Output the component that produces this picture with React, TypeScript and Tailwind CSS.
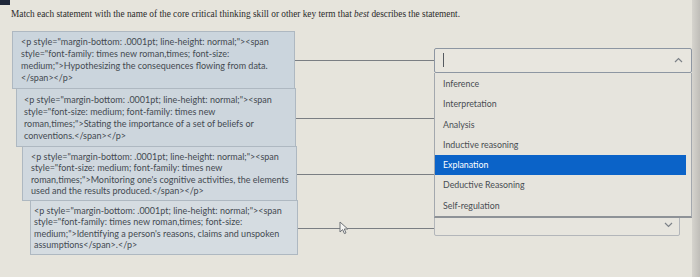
import React from "react";

const cards: { lines: string[]; cls: string; text: string }[] = [
  {
    lines: [
      '<p style="margin-bottom: .0001pt; line-height: normal;"><span',
      'style="font-family: times new roman,times; font-size:',
      'medium;">Hypothesizing the consequences flowing from data.',
      "</span></p>",
    ],
    cls: "ml-[12px] w-[283px] h-[58px] bg-[#cbd5dd]",
    text: "pl-[8px] leading-[12px]",
  },
  {
    lines: [
      '<p style="margin-bottom: .0001pt; line-height: normal;"><span',
      'style="font-size: medium; font-family: times new',
      'roman,times;">Stating the importance of a set of beliefs or',
      "conventions.</span></p>",
    ],
    cls: "ml-[16px] w-[280px] h-[59px] bg-[#cdd6dd] -mt-px",
    text: "pl-[7px] leading-[12px]",
  },
  {
    lines: [
      '<p style="margin-bottom: .0001pt; line-height: normal;"><span',
      'style="font-size: medium; font-family: times new',
      'roman,times;">Monitoring one\'s cognitive activities, the elements',
      "used and the results produced.</span></p>",
    ],
    cls: "ml-[22px] w-[275px] h-[55px] bg-[#d0d8df] -mt-px",
    text: "pl-[8px] leading-[11.5px]",
  },
  {
    lines: [
      '<p style="margin-bottom: .0001pt; line-height: normal;"><span',
      'style="font-family: times new roman,times; font-size:',
      'medium;">Identifying a person\'s reasons, claims and unspoken',
      "assumptions</span>.</p>",
    ],
    cls: "ml-[30px] w-[268px] h-[55px] bg-[#d5dce1] -mt-px",
    text: "pl-[3px] leading-[11.5px]",
  },
];

const options = [
  "Inference",
  "Interpretation",
  "Analysis",
  "Inductive reasoning",
  "Explanation",
  "Deductive Reasoning",
  "Self-regulation",
];

function ChevronUp() {
  return (
    <svg width="9" height="6" viewBox="0 0 9 6" className="block">
      <path d="M1 5 L4.5 1.5 L8 5" fill="none" stroke="#7d8288" strokeWidth="1.2" />
    </svg>
  );
}

function ChevronDown() {
  return (
    <svg width="9" height="6" viewBox="0 0 9 6" className="block">
      <path d="M1 1 L4.5 4.5 L8 1" fill="none" stroke="#7d8288" strokeWidth="1.2" />
    </svg>
  );
}

function Cursor() {
  return (
    <svg width="10" height="14" viewBox="0 0 10 14">
      <path
        d="M1 1 L1 11 L3.6 8.6 L5.4 12.6 L7 11.9 L5.3 8 L8.8 8 Z"
        fill="#f4f4f2"
        stroke="#6e7277"
        strokeWidth="1"
        strokeLinejoin="round"
      />
    </svg>
  );
}

export default function App() {
  return (
    <div
      className="flex w-[700px] h-[277px] overflow-hidden bg-[#e6e4dc]"
      style={{ fontFamily: "Lato, 'Noto Sans', sans-serif" }}
    >
      <div className="relative flex-1 flex flex-col">
        <div className="w-[10px] h-[5px] bg-[#1f283a]" />
        <p
          className="ml-[11px] mt-[4px] text-[9.3px] leading-[10px] text-[#2b2b2b] whitespace-nowrap"
          style={{ fontFamily: "'Liberation Serif', 'Times New Roman', serif" }}
        >
          Match each statement with the name of the core critical thinking skill or other key term that{" "}
          <i>best</i> describes the statement.
        </p>

        <div className="mt-[12px] flex flex-col">
          {cards.map((c, i) => (
            <div key={i} className="flex items-stretch">
              <div
                className={`${c.cls} shrink-0 border border-[#aeb8c1] flex flex-col justify-center`}
              >
                <div className={`${c.text} text-[9px] text-[#444a51] whitespace-nowrap`}>
                  {c.lines.map((l, j) => (
                    <div key={j}>{l}</div>
                  ))}
                </div>
              </div>
              <div className={`flex-1 flex ${i === 3 ? "items-start" : "items-center"}`}>
                <div className={`flex-1 h-px bg-[#7a7e83] ${i === 3 ? "mt-[27px]" : ""}`} />
                {i === 0 && (
                  <div className="relative w-[258px] h-[25px] border border-[#8d96a2] rounded-[2px] bg-[#e8e6df] flex items-center justify-between px-[8px]">
                    <div className="w-px h-[14px] bg-[#555a60]" />
                    <ChevronUp />
                    <div className="absolute left-[-1px] top-[24px] w-[258px] h-[145px] border border-t-0 border-[#a3a8ae] border-b-2 border-b-[#8e9297] bg-[#e6e4dd] z-10 flex flex-col pt-[1px]">
                      {options.map((o) => (
                        <div
                          key={o}
                          className={`h-[20.5px] flex items-center pl-[8px] text-[8.8px] ${
                            o === "Explanation"
                              ? "bg-[#0b63c8] text-white mr-[5px]"
                              : "text-[#484d53]"
                          }`}
                        >
                          {o}
                        </div>
                      ))}
                    </div>
                  </div>
                )}
                {(i === 1 || i === 2) && (
                  <div className="w-[258px] h-[24px] border border-[#a3a8ae] rounded-[2px]" />
                )}
                {i === 3 && (
                  <div className="w-[246px] h-[22px] mr-[12px] mt-[13px] border border-[#b3b6ba] rounded-[2px] bg-[#e7e5de] flex items-center justify-end pr-[6px]">
                    <ChevronDown />
                  </div>
                )}
              </div>
            </div>
          ))}
        </div>

        <div className="absolute left-[339px] top-[221px]">
          <Cursor />
        </div>
      </div>
      <div className="w-[8px] bg-gradient-to-r from-[#d6d4ce] to-[#bfbdb8]" />
    </div>
  );
}
